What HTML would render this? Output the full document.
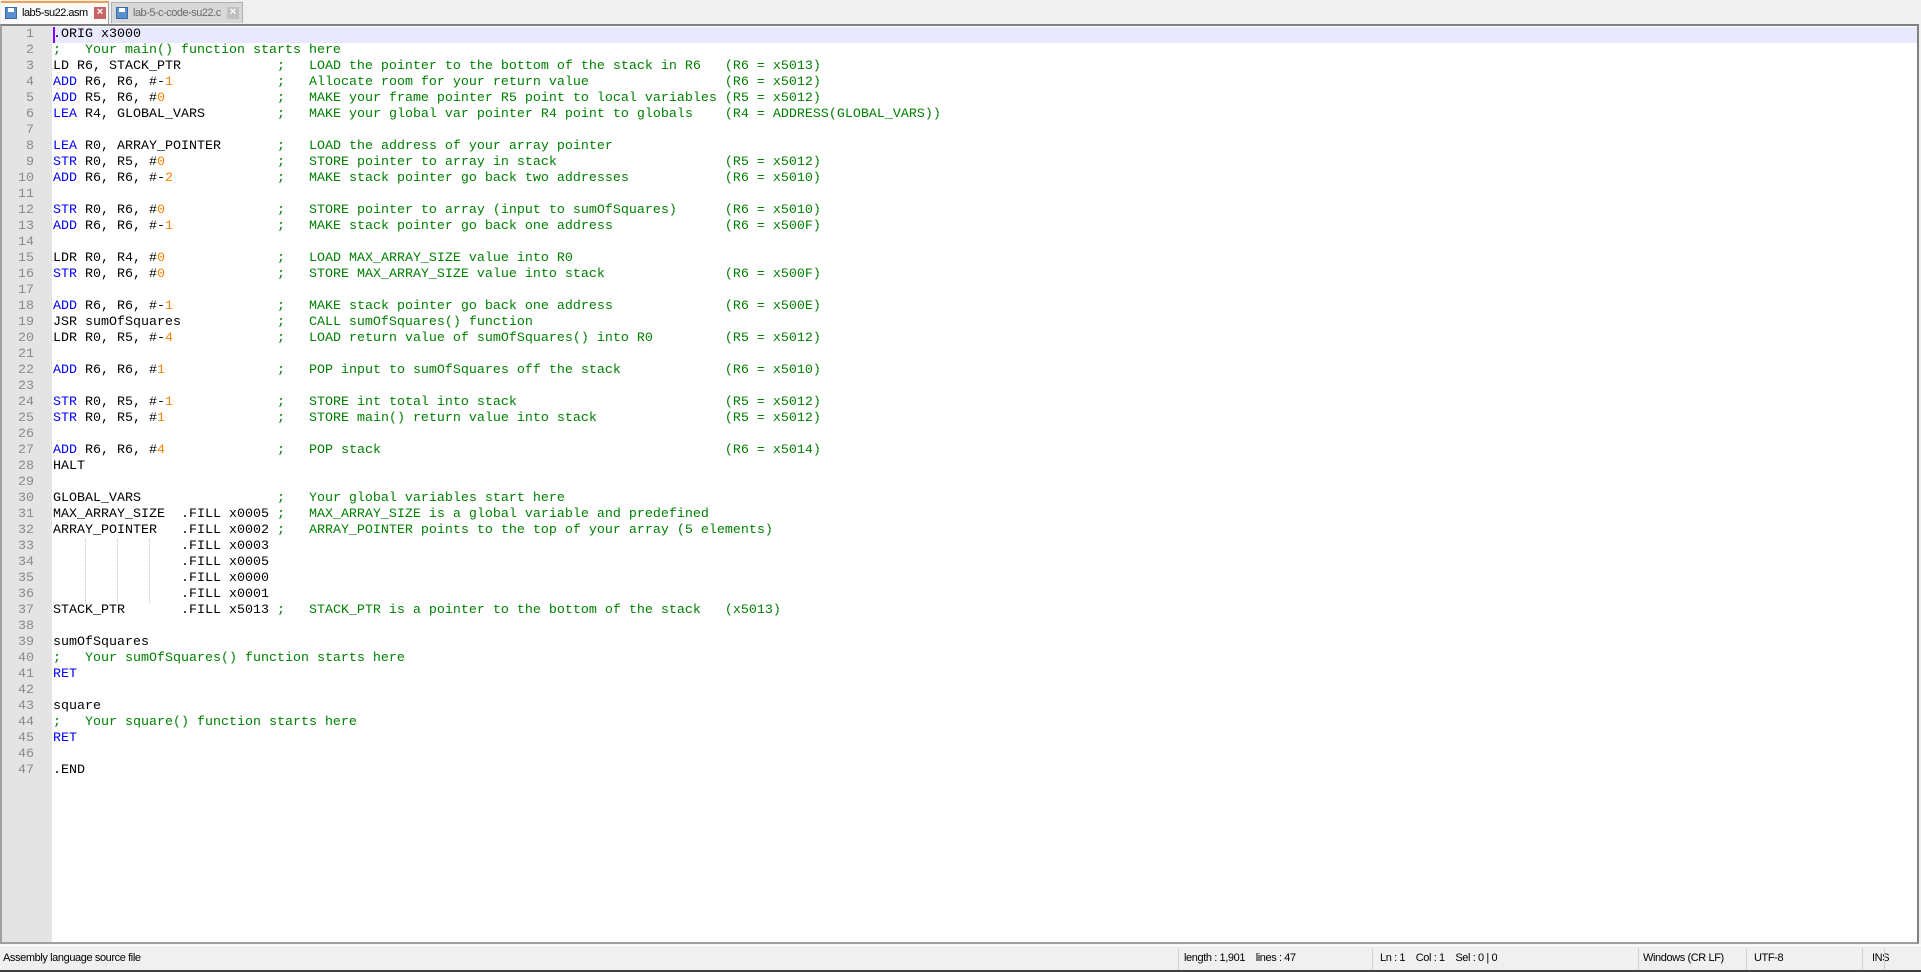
<!DOCTYPE html>
<html><head><meta charset="utf-8"><style>
*{margin:0;padding:0;box-sizing:border-box}
body{width:1921px;height:972px;background:#f0f0f0;position:relative;overflow:hidden;font-family:"Liberation Sans",sans-serif}
.tabbar{position:absolute;left:0;top:0;width:1921px;height:24px;background:#f0f0f0}
.tab{position:absolute;top:2px;height:21px;font-size:11px;line-height:20px;padding-left:21px;letter-spacing:-0.5px;white-space:nowrap}
.t1{left:1px;width:108px;background:#fafafa;border-top:2px solid #f0a050;color:#000;border-right:1px solid #a0a0a0;top:1px;height:23px}
.t2{left:111px;width:132px;background:#d8d8d8;color:#6a6a6a;border:1px solid #b0b0b0;border-bottom:none}
.ico{position:absolute;left:4px;top:4px;width:12px;height:12px;background:#5a8fd0;border:1px solid #3a6aa8}
.ico:after{content:"";position:absolute;left:2px;top:0;width:6px;height:4px;background:#fff}
.x{position:absolute;top:4px;width:12px;height:12px;font-size:11px;line-height:11px;text-align:center;color:#fff;font-weight:bold;letter-spacing:0}
.t1 .x{left:93px;background:#c86464}
.t2 .x{left:115px;background:#c0c0c0}
.editor{position:absolute;left:0;top:24px;width:1919px;height:920px;background:#fff;border:2px solid #a0a0a0;border-right-color:#808080;border-top-color:#808080}
.gutter{position:absolute;left:0;top:0;width:50px;height:100%;background:#e4e4e4}
.hl{position:absolute;left:50px;right:0;top:1px;height:16px;background:#e8e8ff}
.caret{position:absolute;left:51px;top:1px;width:2px;height:16px;background:#8000ff}
.nums,.code{position:absolute;top:1px;font-family:"Liberation Mono",monospace;font-size:13.33px;line-height:16px;white-space:pre}
.nums{left:0;width:32px;text-align:right;color:#8a8a8a}
.code{left:51px;color:#000}
.k{color:#0000ff}.n{color:#ff8000}.c{color:#008000}
.guide{position:absolute;width:0;border-left:1px dotted #c0c0c0;top:513px;height:64px}
.status{position:absolute;left:0;top:945px;width:1921px;height:25px;background:#f0f0f0;font-size:11px;line-height:25px;color:#000;letter-spacing:-0.4px;border-top:1px solid #fff;white-space:nowrap}
.status span{position:absolute;top:0}
.sep{position:absolute;top:2px;width:1px;height:22px;background:#d0d0d0}
.bottom{position:absolute;left:0;top:970px;width:1921px;height:2px;background:#404040}
</style></head><body>
<div class="tabbar">
<div class="tab t1"><div class="ico"></div>lab5-su22.asm<div class="x">×</div></div>
<div class="tab t2"><div class="ico"></div>lab-5-c-code-su22.c<div class="x">×</div></div>
</div>
<div class="editor">
<div class="gutter"></div>
<div class="hl"></div>
<div class="caret"></div>
<div class="guide" style="left:83px"></div>
<div class="guide" style="left:115px"></div>
<div class="guide" style="left:147px"></div>
<div class="nums">1
2
3
4
5
6
7
8
9
10
11
12
13
14
15
16
17
18
19
20
21
22
23
24
25
26
27
28
29
30
31
32
33
34
35
36
37
38
39
40
41
42
43
44
45
46
47</div>
<div class="code">.ORIG x3000
<span class="c">;   Your main() function starts here</span>
LD R6, STACK_PTR            <span class="c">;   LOAD the pointer to the bottom of the stack in R6   (R6 = x5013)</span>
<span class="k">ADD</span> R6, R6, #-<span class="n">1</span>             <span class="c">;   Allocate room for your return value                 (R6 = x5012)</span>
<span class="k">ADD</span> R5, R6, #<span class="n">0</span>              <span class="c">;   MAKE your frame pointer R5 point to local variables (R5 = x5012)</span>
<span class="k">LEA</span> R4, GLOBAL_VARS         <span class="c">;   MAKE your global var pointer R4 point to globals    (R4 = ADDRESS(GLOBAL_VARS))</span>

<span class="k">LEA</span> R0, ARRAY_POINTER       <span class="c">;   LOAD the address of your array pointer</span>
<span class="k">STR</span> R0, R5, #<span class="n">0</span>              <span class="c">;   STORE pointer to array in stack                     (R5 = x5012)</span>
<span class="k">ADD</span> R6, R6, #-<span class="n">2</span>             <span class="c">;   MAKE stack pointer go back two addresses            (R6 = x5010)</span>

<span class="k">STR</span> R0, R6, #<span class="n">0</span>              <span class="c">;   STORE pointer to array (input to sumOfSquares)      (R6 = x5010)</span>
<span class="k">ADD</span> R6, R6, #-<span class="n">1</span>             <span class="c">;   MAKE stack pointer go back one address              (R6 = x500F)</span>

LDR R0, R4, #<span class="n">0</span>              <span class="c">;   LOAD MAX_ARRAY_SIZE value into R0</span>
<span class="k">STR</span> R0, R6, #<span class="n">0</span>              <span class="c">;   STORE MAX_ARRAY_SIZE value into stack               (R6 = x500F)</span>

<span class="k">ADD</span> R6, R6, #-<span class="n">1</span>             <span class="c">;   MAKE stack pointer go back one address              (R6 = x500E)</span>
JSR sumOfSquares            <span class="c">;   CALL sumOfSquares() function</span>
LDR R0, R5, #-<span class="n">4</span>             <span class="c">;   LOAD return value of sumOfSquares() into R0         (R5 = x5012)</span>

<span class="k">ADD</span> R6, R6, #<span class="n">1</span>              <span class="c">;   POP input to sumOfSquares off the stack             (R6 = x5010)</span>

<span class="k">STR</span> R0, R5, #-<span class="n">1</span>             <span class="c">;   STORE int total into stack                          (R5 = x5012)</span>
<span class="k">STR</span> R0, R5, #<span class="n">1</span>              <span class="c">;   STORE main() return value into stack                (R5 = x5012)</span>

<span class="k">ADD</span> R6, R6, #<span class="n">4</span>              <span class="c">;   POP stack                                           (R6 = x5014)</span>
HALT

GLOBAL_VARS                 <span class="c">;   Your global variables start here</span>
MAX_ARRAY_SIZE  .FILL x0005 <span class="c">;   MAX_ARRAY_SIZE is a global variable and predefined</span>
ARRAY_POINTER   .FILL x0002 <span class="c">;   ARRAY_POINTER points to the top of your array (5 elements)</span>
                .FILL x0003
                .FILL x0005
                .FILL x0000
                .FILL x0001
STACK_PTR       .FILL x5013 <span class="c">;   STACK_PTR is a pointer to the bottom of the stack   (x5013)</span>

sumOfSquares
<span class="c">;   Your sumOfSquares() function starts here</span>
<span class="k">RET</span>

square
<span class="c">;   Your square() function starts here</span>
<span class="k">RET</span>

.END</div>
</div>
<div class="status">
<span style="left:3px">Assembly language source file</span>
<div class="sep" style="left:1178px"></div>
<span style="left:1184px">length : 1,901&nbsp;&nbsp;&nbsp; lines : 47</span>
<div class="sep" style="left:1372px"></div>
<span style="left:1380px">Ln : 1&nbsp;&nbsp;&nbsp; Col : 1&nbsp;&nbsp;&nbsp; Sel : 0 | 0</span>
<div class="sep" style="left:1638px"></div>
<span style="left:1643px">Windows (CR LF)</span>
<div class="sep" style="left:1746px"></div>
<span style="left:1754px">UTF-8</span>
<div class="sep" style="left:1862px"></div>
<span style="left:1872px">INS</span>
<div class="sep" style="left:1884px"></div>
</div>
<div class="bottom"></div>
</body></html>
